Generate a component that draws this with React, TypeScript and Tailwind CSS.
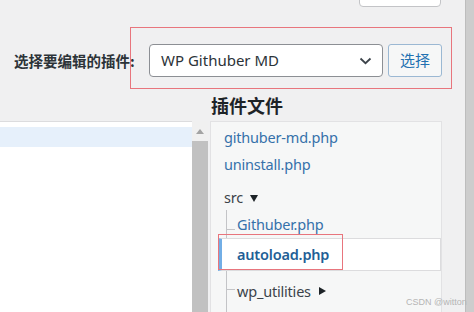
import React from "react";

function Chevron() {
  return (
    <svg width="13" height="8" viewBox="0 0 13 8" fill="none">
      <path d="M1.5 1.5 L6.5 6.2 L11.5 1.5" stroke="#3c434a" strokeWidth="1.8" />
    </svg>
  );
}

function TriDown() {
  return (
    <svg width="8" height="7" viewBox="0 0 8 7" className="ml-[7px]">
      <path d="M0 0 H8 L4 7 Z" fill="#1d2327" />
    </svg>
  );
}

function TriRight() {
  return (
    <svg width="7" height="8" viewBox="0 0 7 8" className="ml-[8px]">
      <path d="M0 0 L7 4 L0 8 Z" fill="#1d2327" />
    </svg>
  );
}

export default function App() {
  return (
    <div className="relative flex h-[312px] w-[474px] overflow-hidden bg-[#f0f0f1] font-['Noto_Sans','Noto_Sans_CJK_SC',sans-serif] text-[#1d2327]">
      <div className="flex flex-1 flex-col">
        {/* cut-off button at the top */}
        <div className="flex h-[7px]">
          <div className="ml-[359px] mt-[-24px] h-[31px] w-[82px] shrink-0 rounded-[4px] border border-[#c3c4c7] bg-white" />
        </div>

        {/* plugin select row */}
        <div className="mt-[37px] flex h-[33px] items-center pl-[14px]">
          <label className="w-[135px] font-['Noto_Sans_CJK_SC',sans-serif] text-[14.5px] font-bold text-[#2c3338]">
            选择要编辑的插件:
          </label>
          <div className="flex h-[33px] w-[234px] items-center justify-between rounded-[4px] border border-[#8c8f94] bg-white pl-[11px] pr-[10px] text-[15px] text-[#2c3338]">
            <span>WP Githuber MD</span>
            <Chevron />
          </div>
          <button className="ml-[5px] h-[33px] w-[54px] rounded-[3px] border border-[#9bb8d3] bg-[#f6f7f7] font-['Noto_Sans_CJK_SC',sans-serif] text-[15px] text-[#2271b1]">
            选择
          </button>
        </div>

        <h2 className="mt-[16px] pl-[211px] font-['Noto_Sans_CJK_SC',sans-serif] text-[18px] font-bold leading-[24px] text-[#1d2327]">
          插件文件
        </h2>

        {/* panels */}
        <div className="mt-[4px] flex flex-1">
          <div className="w-[192px] border-t border-[#dcdcde] bg-white pt-[5px]">
            <div className="h-[20px] bg-[#e6f0fb]" />
          </div>
          <div className="flex w-[16px] flex-col">
            <div className="flex h-[20px] items-center justify-center bg-[#f0f0f0]">
              <svg width="8" height="5" viewBox="0 0 8 5">
                <path d="M0 5 L4 0 L8 5 Z" fill="#a3a3a3" />
              </svg>
            </div>
            <div className="flex-1 bg-[#c1c1c1]" />
          </div>

          <div className="ml-[2px] flex w-[232px] flex-col border border-b-0 border-[#e2e2e4] bg-[#f6f7f7] pl-[7px] text-[14.5px] tracking-[-0.2px]">
            <div className="mt-[4px] flex h-[24px] items-center pl-[6px] text-[#3571aa]">githuber-md.php</div>
            <div className="mt-[3px] flex h-[24px] items-center pl-[6px] text-[#3571aa]">uninstall.php</div>
            <div className="mt-[9px] flex h-[24px] items-center pl-[6px] text-[#3c434a]">
              src
              <TriDown />
            </div>

            <div className="flex flex-1 flex-col">
              <div className="ml-[8px] flex h-[28px] items-start border-l border-[#c3c4c7]">
                <span className="mt-[19px] h-px w-[8px] bg-[#c3c4c7]" />
                <span className="ml-[2px] leading-[28px] text-[#3571aa]">Githuber.php</span>
              </div>
              <div className="flex h-[33px] items-center border border-l-4 border-[#dcdcde] border-l-[#72aee6] bg-white pl-[15px] font-semibold text-[#1f5f96]">
                autoload.php
              </div>
              <div className="ml-[8px] flex h-[40px] items-start border-l border-[#c3c4c7]">
                <span className="mt-[18px] h-px w-[8px] bg-[#c3c4c7]" />
                <span className="ml-[2px] flex items-center leading-[40px] text-[#3c434a]">
                  wp_utilities
                  <TriRight />
                </span>
              </div>
              <div className="ml-[8px] flex-1 border-l border-[#c3c4c7]" />
            </div>
          </div>
        </div>
      </div>

      {/* window scrollbar strip */}
      <div className="w-[9px] border-l border-[#bdbdbd] bg-[#cdcdcd]" />

      {/* annotation boxes */}
      <div className="pointer-events-none absolute left-[130px] top-[27px] h-[62px] w-[322px] border border-[#e8757d]" />
      <div className="pointer-events-none absolute left-[218px] top-[234px] h-[36px] w-[125px] border border-[#e8757d]" />

      <div className="absolute left-[406px] top-[296px] whitespace-nowrap font-['Liberation_Sans',sans-serif] text-[9px] text-[#b5b5b5]">
        CSDN @witton
      </div>
    </div>
  );
}
